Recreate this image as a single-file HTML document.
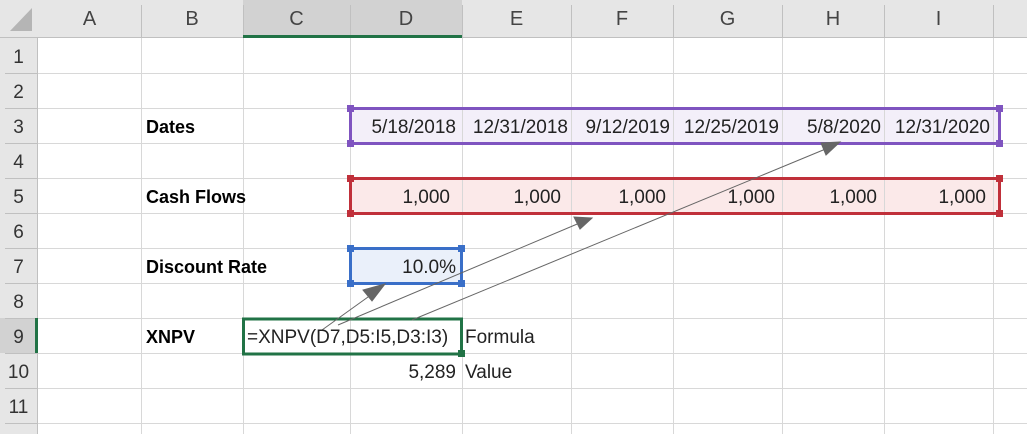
<!DOCTYPE html>
<html><head><style>
body{margin:0;width:1027px;height:434px;overflow:hidden;background:#fff;font-family:"Liberation Sans",Arial,sans-serif;}
.abs{position:absolute}
.t{position:absolute;font-size:19px;line-height:35px;color:#222;white-space:nowrap}
.b{font-weight:bold;color:#000;font-size:18px}
.r{text-align:right}
</style></head><body>
<svg class="abs" style="left:0;top:0" width="1027" height="434">
<rect x="0" y="0" width="1027" height="38" fill="#e6e6e6"/>
<rect x="0" y="0" width="38" height="434" fill="#e6e6e6"/>
<rect x="243" y="0" width="219" height="38" fill="#d2d2d2"/>
<rect x="0" y="318" width="38" height="35" fill="#d2d2d2"/>
<polygon points="32,8 32,31 10,31" fill="#b5b5b5"/>
<rect x="350" y="108" width="650" height="35" fill="#f3eff9"/>
<rect x="350" y="178" width="650" height="35" fill="#fbe9e9"/>
<rect x="350" y="248" width="112" height="35" fill="#eaf0fa"/>
<g stroke="#d8d8d8" stroke-width="1">
<line x1="141.5" y1="38" x2="141.5" y2="434"/><line x1="243.5" y1="38" x2="243.5" y2="434"/>
<line x1="350.5" y1="38" x2="350.5" y2="434"/><line x1="462.5" y1="38" x2="462.5" y2="434"/>
<line x1="571.5" y1="38" x2="571.5" y2="434"/><line x1="673.5" y1="38" x2="673.5" y2="434"/>
<line x1="782.5" y1="38" x2="782.5" y2="434"/><line x1="884.5" y1="38" x2="884.5" y2="434"/>
<line x1="993.5" y1="38" x2="993.5" y2="434"/>
<line x1="38" y1="73.5" x2="1027" y2="73.5"/><line x1="38" y1="108.5" x2="1027" y2="108.5"/>
<line x1="38" y1="143.5" x2="1027" y2="143.5"/><line x1="38" y1="178.5" x2="1027" y2="178.5"/>
<line x1="38" y1="213.5" x2="1027" y2="213.5"/><line x1="38" y1="248.5" x2="1027" y2="248.5"/>
<line x1="38" y1="283.5" x2="1027" y2="283.5"/><line x1="38" y1="318.5" x2="1027" y2="318.5"/>
<line x1="38" y1="353.5" x2="1027" y2="353.5"/><line x1="38" y1="388.5" x2="1027" y2="388.5"/>
<line x1="38" y1="423.5" x2="1027" y2="423.5"/>
</g>
<g stroke="#c0c0c0">
<line x1="141.5" y1="5" x2="141.5" y2="38"/><line x1="243.5" y1="5" x2="243.5" y2="38"/><line x1="350.5" y1="5" x2="350.5" y2="38"/><line x1="462.5" y1="5" x2="462.5" y2="38"/><line x1="571.5" y1="5" x2="571.5" y2="38"/><line x1="673.5" y1="5" x2="673.5" y2="38"/><line x1="782.5" y1="5" x2="782.5" y2="38"/><line x1="884.5" y1="5" x2="884.5" y2="38"/><line x1="993.5" y1="5" x2="993.5" y2="38"/>
<line x1="0" y1="37.5" x2="1027" y2="37.5"/><line x1="37.5" y1="38" x2="37.5" y2="434"/>
<line x1="5" y1="73.5" x2="38" y2="73.5"/><line x1="5" y1="108.5" x2="38" y2="108.5"/><line x1="5" y1="143.5" x2="38" y2="143.5"/><line x1="5" y1="178.5" x2="38" y2="178.5"/><line x1="5" y1="213.5" x2="38" y2="213.5"/><line x1="5" y1="248.5" x2="38" y2="248.5"/><line x1="5" y1="283.5" x2="38" y2="283.5"/><line x1="5" y1="318.5" x2="38" y2="318.5"/><line x1="5" y1="353.5" x2="38" y2="353.5"/><line x1="5" y1="388.5" x2="38" y2="388.5"/><line x1="5" y1="423.5" x2="38" y2="423.5"/>
</g>
<line x1="243" y1="36.5" x2="462" y2="36.5" stroke="#217346" stroke-width="3"/>
<line x1="36.5" y1="318" x2="36.5" y2="353" stroke="#217346" stroke-width="3"/>
<rect x="350.5" y="108.5" width="649" height="35" fill="none" stroke="#7f54c0" stroke-width="3"/>
<g fill="#7f54c0"><rect x="347" y="105" width="7" height="7"/><rect x="996" y="105" width="7" height="7"/><rect x="347" y="140" width="7" height="7"/><rect x="996" y="140" width="7" height="7"/></g>
<rect x="350.5" y="178.5" width="649" height="35" fill="none" stroke="#c0303a" stroke-width="3"/>
<g fill="#c0303a"><rect x="347" y="175" width="7" height="7"/><rect x="996" y="175" width="7" height="7"/><rect x="347" y="210" width="7" height="7"/><rect x="996" y="210" width="7" height="7"/></g>
<rect x="350.5" y="248.5" width="111" height="35" fill="none" stroke="#3a6fc8" stroke-width="3"/>
<g fill="#3a6fc8"><rect x="347" y="245" width="7" height="7"/><rect x="458" y="245" width="7" height="7"/><rect x="347" y="280" width="7" height="7"/><rect x="458" y="280" width="7" height="7"/></g>
<rect x="243.5" y="319" width="218" height="35" fill="none" stroke="#217346" stroke-width="3"/>
<rect x="458" y="350" width="7" height="7" fill="#217346"/>
<g stroke="#666" stroke-width="1" fill="#666">
<line x1="322" y1="330" x2="375" y2="292"/><polygon points="385,284 363,290 372,301"/>
<line x1="338" y1="325" x2="582" y2="222"/><polygon points="592,218 574,217 580,229"/>
<line x1="412" y1="320" x2="828" y2="148"/><polygon points="840,142 821,143 826,155"/>
</g>
</svg>
<div class="t" style="left:0;top:2px;width:1027px;color:#444;font-size:20px">
<span class="abs" style="left:38px;width:103px;text-align:center">A</span>
<span class="abs" style="left:141px;width:102px;text-align:center">B</span>
<span class="abs" style="left:243px;width:107px;text-align:center">C</span>
<span class="abs" style="left:350px;width:112px;text-align:center">D</span>
<span class="abs" style="left:462px;width:109px;text-align:center">E</span>
<span class="abs" style="left:571px;width:102px;text-align:center">F</span>
<span class="abs" style="left:673px;width:109px;text-align:center">G</span>
<span class="abs" style="left:782px;width:102px;text-align:center">H</span>
<span class="abs" style="left:884px;width:109px;text-align:center">I</span>
</div>
<div class="abs" style="left:0;top:40px;width:37px;color:#333;font-size:19px;line-height:35px;text-align:center">
<div>1</div><div>2</div><div>3</div><div>4</div><div>5</div><div>6</div><div>7</div><div>8</div><div>9</div><div>10</div><div>11</div></div>
<div class="t b" style="left:146px;top:110px">Dates</div>
<div class="t b" style="left:146px;top:180px">Cash Flows</div>
<div class="t b" style="left:146px;top:250px">Discount Rate</div>
<div class="t b" style="left:146px;top:320px">XNPV</div>
<div class="t r" style="left:350px;top:110px;width:106px">5/18/2018</div>
<div class="t r" style="left:462px;top:110px;width:106px">12/31/2018</div>
<div class="t r" style="left:571px;top:110px;width:99px">9/12/2019</div>
<div class="t r" style="left:673px;top:110px;width:106px">12/25/2019</div>
<div class="t r" style="left:782px;top:110px;width:99px">5/8/2020</div>
<div class="t r" style="left:884px;top:110px;width:106px">12/31/2020</div>
<div class="t r" style="left:350px;top:180px;width:100px">1,000</div>
<div class="t r" style="left:462px;top:180px;width:99px">1,000</div>
<div class="t r" style="left:571px;top:180px;width:95px">1,000</div>
<div class="t r" style="left:673px;top:180px;width:102px">1,000</div>
<div class="t r" style="left:782px;top:180px;width:95px">1,000</div>
<div class="t r" style="left:884px;top:180px;width:102px">1,000</div>
<div class="t r" style="left:350px;top:250px;width:106px">10.0%</div>
<div class="t" style="left:247px;top:320px">=XNPV(D7,D5:I5,D3:I3)</div>
<div class="t" style="left:465px;top:320px">Formula</div>
<div class="t r" style="left:350px;top:355px;width:106px">5,289</div>
<div class="t" style="left:465px;top:355px">Value</div>
</body></html>
